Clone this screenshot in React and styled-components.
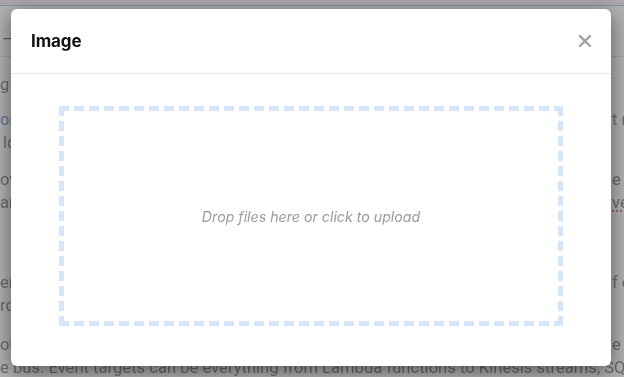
import React from "react";
import styled, { createGlobalStyle } from "styled-components";

const GlobalStyle = createGlobalStyle`
  html, body {
    margin: 0;
    padding: 0;
    width: 100%;
    height: 100%;
    overflow: hidden;
    background: #ffffff;
  }
  #root { height: 100%; }
  * { box-sizing: border-box; }
`;

const Page = styled.div`
  position: relative;
  height: 100vh;
  overflow: hidden;
  font-family: Roboto, "Liberation Sans", sans-serif;
`;

const Document = styled.div`
  filter: blur(0.4px);
`;

const TopStrip = styled.div`
  height: 6px;
  background: #f3f3f3;
  border-bottom: 1px solid #b7d3f2;
`;

const Toolbar = styled.div`
  height: 51px;
  display: flex;
  align-items: center;
  padding: 16px 0 0 2px;
  border-bottom: 1px solid #e6e6e6;
  color: #8a8a8a;
  font-size: 16px;
`;

const Content = styled.div`
  padding-top: 16px;
  display: flex;
  flex-direction: column;
`;

const Paragraph = styled.div`
  margin-top: ${(p) => p.$gap || 0}px;
  display: flex;
  flex-direction: column;
`;

const Line = styled.div`
  display: grid;
  grid-template-columns: 612px max-content;
  height: 23px;
  line-height: 23px;
  font-size: 16.5px;
  color: #9a9a9a;
  white-space: nowrap;
  padding-left: ${(p) => p.$indent || 0}px;
`;

const FullLine = styled.div`
  height: 23px;
  line-height: 23px;
  font-size: 16.6px;
  color: #9a9a9a;
  white-space: nowrap;
`;

const Link = styled.span`
  color: #8aa9dc;
`;

const Misspelled = styled.span`
  text-decoration: underline dotted #e07070;
  text-underline-offset: 3px;
`;

const Overlay = styled.div`
  position: fixed;
  inset: 0;
  background: rgba(0, 0, 0, 0.31);
  padding: 9px 0 0 11px;
`;

const Modal = styled.div`
  width: 600px;
  background: #ffffff;
  border-radius: 6px;
  box-shadow: 0 5px 20px rgba(0, 0, 0, 0.5);
  font-family: Inter, "Liberation Sans", sans-serif;
`;

const Header = styled.div`
  height: 65px;
  display: flex;
  align-items: center;
  justify-content: space-between;
  padding: 0 20px;
  border-bottom: 1px solid #e9e9e9;
`;

const Title = styled.h4`
  margin: 0;
  font-size: 17px;
  font-weight: 700;
  color: #111111;
  letter-spacing: -0.1px;
`;

const CloseButton = styled.button`
  border: 0;
  background: none;
  padding: 0;
  width: 12px;
  height: 12px;
  display: flex;
  align-items: center;
  justify-content: center;
  cursor: pointer;
  color: #a0a0a0;
`;

const Body = styled.div`
  padding: 32px 48px 40px;
`;

const dash = "#d5e6fb";

const DropZone = styled.div`
  height: 220px;
  display: flex;
  align-items: center;
  justify-content: center;
  background:
    repeating-linear-gradient(90deg, ${dash} 0 10px, transparent 10px 15px) top left / 100% 5px no-repeat,
    repeating-linear-gradient(90deg, ${dash} 0 10px, transparent 10px 15px) bottom left / 100% 5px no-repeat,
    repeating-linear-gradient(180deg, ${dash} 0 10px, transparent 10px 15px) top left / 5px 100% no-repeat,
    repeating-linear-gradient(180deg, ${dash} 0 10px, transparent 10px 15px) top right / 5px 100% no-repeat;
`;

const DropText = styled.span`
  font-size: 14.2px;
  font-style: italic;
  color: #9b9b9b;
`;

export default function App() {
  return (
    <>
      <GlobalStyle />
      <Page>
        <Document>
          <TopStrip />
          <Toolbar>–</Toolbar>
          <Content>
            <Paragraph>
              <Line><span>g</span><span></span></Line>
            </Paragraph>
            <Paragraph $gap={12}>
              <Line><span><Link>on</Link></span><span>t n</span></Line>
              <Line $indent={3}><span>lo</span><span></span></Line>
            </Paragraph>
            <Paragraph $gap={14}>
              <Line><span>ov</span><span>e a</span></Line>
              <Line><span>ar</span><span><Misspelled>ve</Misspelled></span></Line>
            </Paragraph>
            <Paragraph $gap={57}>
              <Line><span>er</span><span>f e</span></Line>
              <Line><span>ro</span><span></span></Line>
            </Paragraph>
            <Paragraph $gap={16}>
              <Line><span>ou</span><span>e e</span></Line>
              <FullLine>e bus. Event targets can be everything from Lambda functions to Kinesis streams, SQS queues</FullLine>
            </Paragraph>
          </Content>
        </Document>
        <Overlay>
          <Modal role="dialog" aria-label="Image">
            <Header>
              <Title>Image</Title>
              <CloseButton aria-label="Close">
                <svg width="12" height="12" viewBox="0 0 12 12">
                  <path d="M1 1 L11 11 M11 1 L1 11" stroke="currentColor" strokeWidth="2.3" strokeLinecap="square" />
                </svg>
              </CloseButton>
            </Header>
            <Body>
              <DropZone>
                <DropText>Drop files here or click to upload</DropText>
              </DropZone>
            </Body>
          </Modal>
        </Overlay>
      </Page>
    </>
  );
}
